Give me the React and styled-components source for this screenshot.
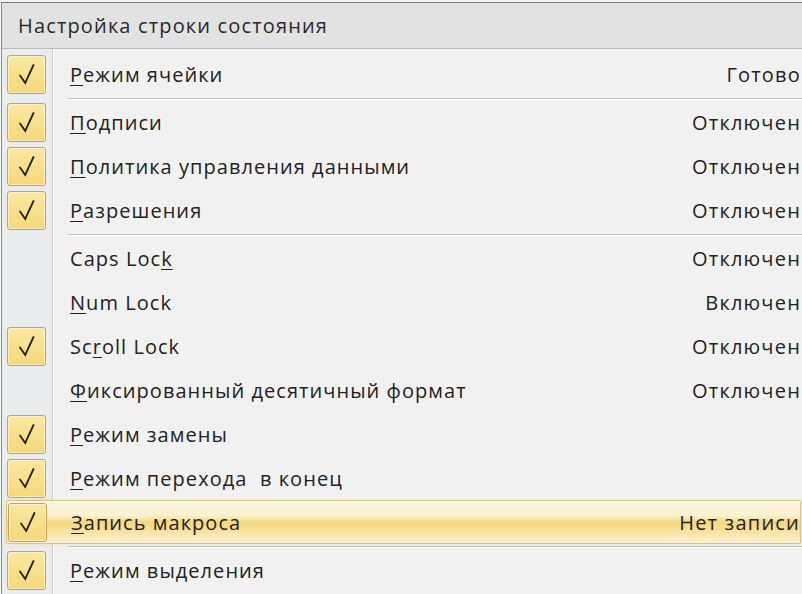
import React from "react";
import styled, { createGlobalStyle, css } from "styled-components";

const Global = createGlobalStyle`
  html, body { margin: 0; padding: 0; background: #f4f4f4; }
  body { font-family: "Open Sans", "Noto Sans", sans-serif; }
`;

const Page = styled.div`
  width: 802px;
  height: 594px;
  overflow: hidden;
  background: #f6f6f6;
  padding: 2px 0 0 1px;
  box-sizing: border-box;
`;

const Menu = styled.div`
  width: 830px;
  height: 620px;
  border-top: 1px solid #7a7a7a;
  border-left: 1px solid #8a8a8a;
  background: #f1f1f1;
  display: flex;
  flex-direction: column;
`;

const Header = styled.div`
  height: 45px;
  display: flex;
  align-items: center;
  padding-left: 16px;
  background: #e2e2e2;
  border-bottom: 1px solid #bdbdbd;
  font-size: 20px;
  letter-spacing: 1.15px;
  color: #2a2a2a;
  font-weight: 500;
`;

const Body = styled.div`
  flex: 1;
  display: flex;
  flex-direction: column;
  padding-top: 3px;
  background: linear-gradient(to right, #eaebec 0, #eaebec 50px, #c9c9c9 50px, #c9c9c9 51px, #fbfbfb 51px, #fbfbfb 52px, #f1f1f1 52px);
`;

const Row = styled.div`
  position: relative;
  height: 44px;
  display: flex;
  align-items: center;
  width: 799px;
  box-sizing: border-box;
  font-size: 20px;
  letter-spacing: 1.05px;
  color: #222;
  ${(p) =>
    p.$active &&
    css`
      margin-left: 4px;
      width: 795px;
      border: 1px solid #d6c58f;
      border-radius: 2px;
      background: linear-gradient(
        to bottom,
        #fbf6e2 0%,
        #fbf1cf 35%,
        #f5d77f 50%,
        #f7dc8c 62%,
        #fbeab8 85%,
        #fcf1d2 100%
      );
      box-shadow: 0 0 3px rgba(240, 200, 90, 0.5);
    `}
`;

const Gutter = styled.div`
  width: ${(p) => (p.$active ? "49px" : "53px")};
  flex: none;
  display: flex;
  align-items: center;
  justify-content: flex-start;
  padding-left: ${(p) => (p.$active ? "1px" : "5px")};
  box-sizing: border-box;
  height: 100%;
`;

const Check = styled.div`
  width: 39px;
  height: 39px;
  box-sizing: border-box;
  border: 1px solid #caa452;
  border-radius: 3px;
  background: linear-gradient(to bottom, #fbe7a3 0%, #f9df8c 50%, #f7d77a 100%);
  box-shadow: inset 0 0 0 1px rgba(255, 250, 225, 0.6);
  display: flex;
  align-items: center;
  justify-content: center;
`;

const Label = styled.div`
  flex: 1;
  padding-left: 15px;
  white-space: pre;
`;

const Value = styled.div`
  white-space: nowrap;
  letter-spacing: 1.2px;
`;

const U = styled.span`
  text-decoration: underline;
  text-underline-offset: 3px;
  text-decoration-thickness: 1px;
`;

const Separator = styled.div`
  height: 4px;
  display: flex;
  align-items: center;
  padding-left: 66px;
  &::after {
    content: "";
    flex: 1;
    height: 1px;
    background: #bdbdbd;
    box-shadow: 0 1px 0 #ffffff;
  }
`;

const CheckMark = () => (
  <svg width="20" height="24" viewBox="0 0 20 24">
    <path
      d="M3 13.5 L8.2 21 L16.5 3"
      fill="none"
      stroke="#222"
      strokeWidth="1.8"
      strokeLinejoin="miter"
      strokeLinecap="round"
    />
  </svg>
);

const items = [
  { label: [["Р", true], ["ежим ячейки"]], value: "Готово", checked: true },
  "sep",
  { label: [["П", true], ["одписи"]], value: "Отключен", checked: true },
  { label: [["П", true], ["олитика управления данными"]], value: "Отключен", checked: true },
  { label: [["Р", true], ["азрешения"]], value: "Отключен", checked: true },
  "sep",
  { label: [["Caps Loc"], ["k", true]], value: "Отключен", checked: false },
  { label: [["N", true], ["um Lock"]], value: "Включен", checked: false },
  { label: [["Sc"], ["r", true], ["oll Lock"]], value: "Отключен", checked: true },
  { label: [["Ф", true], ["иксированный десятичный формат"]], value: "Отключен", checked: false },
  { label: [["Р", true], ["ежим замены"]], value: "", checked: true },
  { label: [["Р", true], ["ежим перехода  в конец"]], value: "", checked: true },
  { label: [["З", true], ["апись макроса"]], value: "Нет записи", checked: true, active: true },
  "sep",
  { label: [["Р", true], ["ежим выделения"]], value: "", checked: true },
];

export default function App() {
  return (
    <>
      <Global />
      <Page>
        <Menu>
          <Header>Настройка строки состояния</Header>
          <Body>
            {items.map((it, i) =>
              it === "sep" ? (
                <Separator key={i} />
              ) : (
                <Row key={i} $active={it.active}>
                  <Gutter $active={it.active}>
                    {it.checked && (
                      <Check>
                        <CheckMark />
                      </Check>
                    )}
                  </Gutter>
                  <Label>
                    {it.label.map(([t, u], j) =>
                      u ? <U key={j}>{t}</U> : <span key={j}>{t}</span>
                    )}
                  </Label>
                  <Value>{it.value}</Value>
                </Row>
              )
            )}
          </Body>
        </Menu>
      </Page>
    </>
  );
}
